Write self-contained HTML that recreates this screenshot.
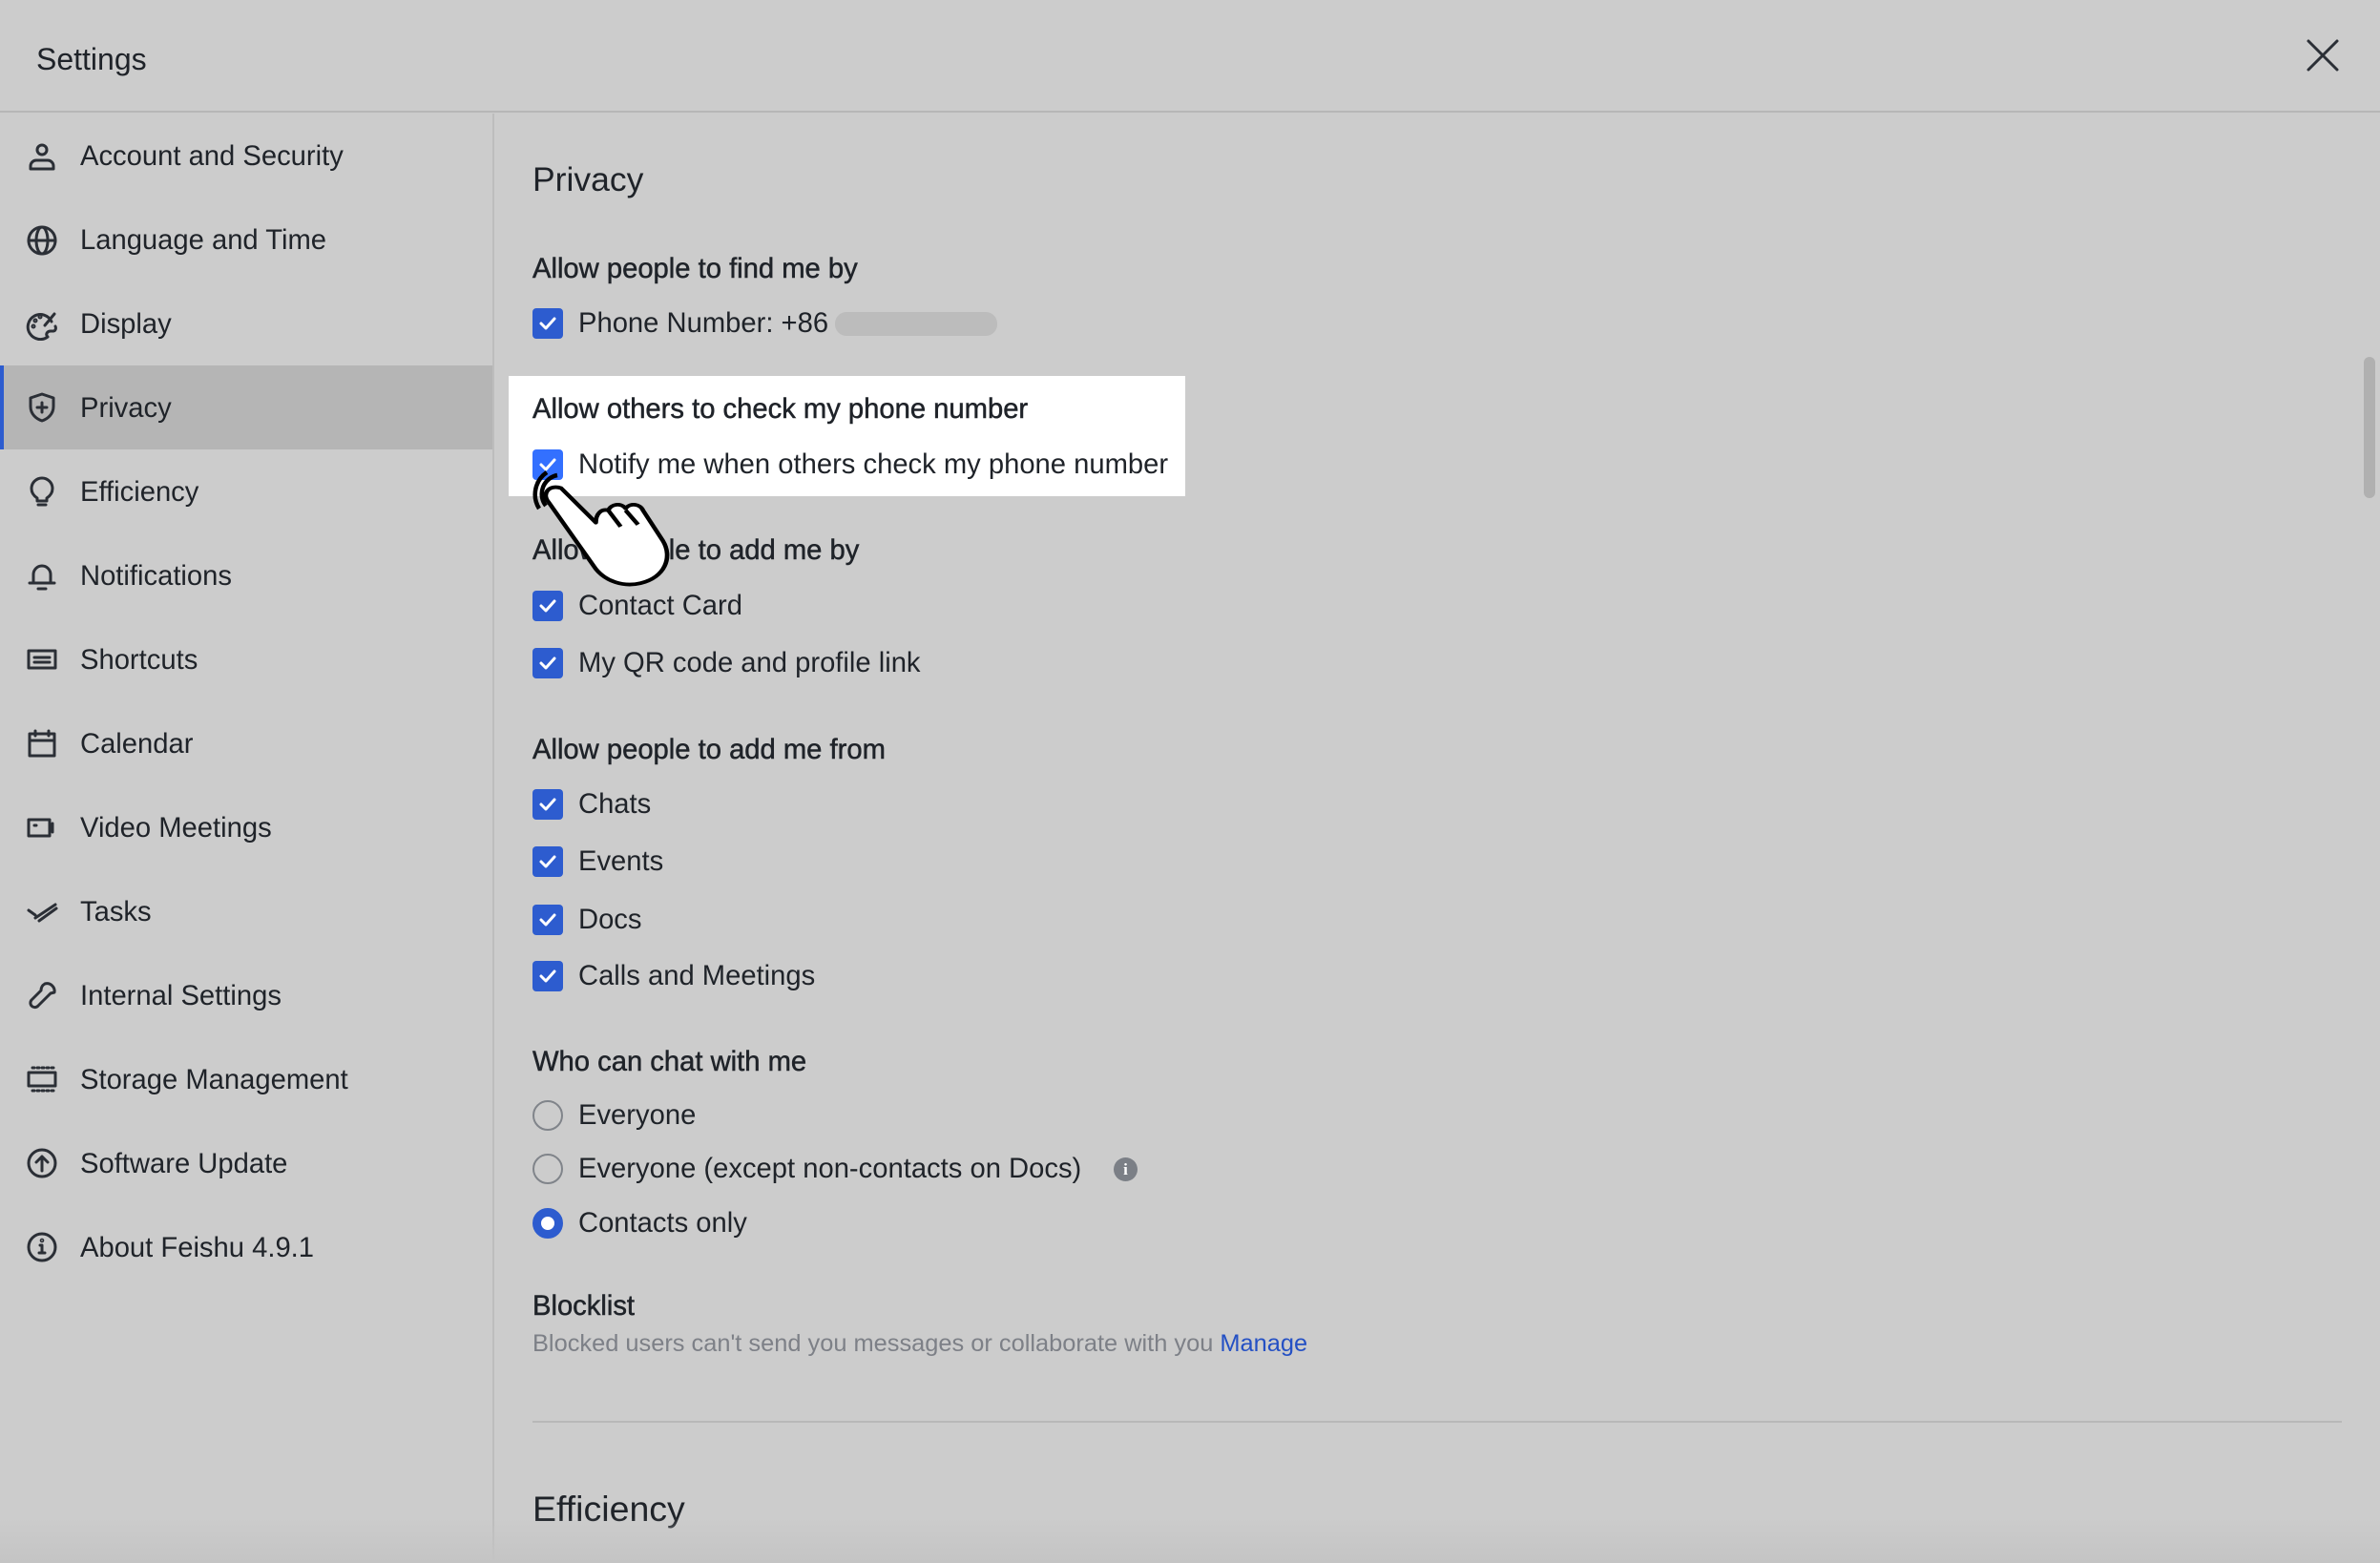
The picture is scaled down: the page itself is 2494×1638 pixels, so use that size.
<!DOCTYPE html>
<html><head><meta charset="utf-8"><style>
*{margin:0;padding:0;box-sizing:border-box}
body{width:2494px;height:1638px;background:#cccccc;font-family:"Liberation Sans",sans-serif;color:#1f2329;position:relative;overflow:hidden}
.a{position:absolute;white-space:nowrap;line-height:40px}
.s{font-size:29.2px}
.h{font-size:29.2px;-webkit-text-stroke:0.5px #1f2329}
.cb{position:absolute;left:558px;width:32px;height:32px;border-radius:4px;background:#2d5ccf}
.cb svg{position:absolute;left:6px;top:7px}
.ic{position:absolute;left:27px;width:34px;height:34px}
.ic *{fill:none;stroke:#2b2f36;stroke-width:3;stroke-linecap:round;stroke-linejoin:round}
.rd{position:absolute;left:558px;width:32px;height:32px;border-radius:50%;border:2.5px solid #80848a}
</style></head><body>
<div style="position:absolute;left:0;top:0;width:2494px;height:118px;border-bottom:2px solid #b7b7b7"></div>
<div class="a" style="left:38px;top:42px;font-size:32px">Settings</div>
<svg style="position:absolute;left:2416px;top:40px" width="36" height="36"><path d="M3 3L33 33M33 3L3 33" stroke="#2b2f36" stroke-width="3" stroke-linecap="round"/></svg>
<div style="position:absolute;left:516px;top:119px;width:2px;height:1519px;background:#bdbdbd"></div>
<div style="position:absolute;left:0;top:383px;width:516px;height:88px;background:#b5b5b5"></div>
<div style="position:absolute;left:0;top:383px;width:4px;height:88px;background:#2d5ccf"></div>

<svg class="ic" style="top:147px" viewBox="0 0 34 34"><circle cx="17" cy="10" r="5"/><path d="M5 30v-3a6 6 0 0 1 6-6h12a6 6 0 0 1 6 6v3z"/></svg>
<svg class="ic" style="top:235px" viewBox="0 0 34 34"><circle cx="17" cy="17" r="14"/><ellipse cx="17" cy="17" rx="6" ry="14"/><path d="M3 17h28"/></svg>
<svg class="ic" style="top:323px" viewBox="0 0 34 34"><path d="M27 14a13 13 0 1 0-4 16c-3-3 0-6 3-6h3c2 0 3-3 2-5"/><path d="M20 18l10-12"/><circle cx="10" cy="13" r="1"/><circle cx="8" cy="19" r="1"/><circle cx="15" cy="9" r="1"/></svg>
<svg class="ic" style="top:410px" viewBox="0 0 34 34"><path d="M17 3l12 4v9c0 8-6 13-12 15C11 29 5 24 5 16V7z"/><path d="M17 12v10M12 17h10"/></svg>
<svg class="ic" style="top:498px" viewBox="0 0 34 34"><path d="M12 24c-3-2-6-5-6-10a11 11 0 0 1 22 0c0 5-3 8-6 10v3H12z"/><path d="M13 31h8"/></svg>
<svg class="ic" style="top:586px" viewBox="0 0 34 34"><path d="M8 24V16a9 9 0 0 1 18 0v8"/><path d="M4 25h26M13 31h8"/></svg>
<svg class="ic" style="top:674px" viewBox="0 0 34 34"><rect x="3" y="8" width="28" height="18"/><path d="M9 15h16M9 20h16"/></svg>
<svg class="ic" style="top:762px" viewBox="0 0 34 34"><rect x="4" y="7" width="26" height="23"/><path d="M4 14h26M10 4v5M24 4v5"/></svg>
<svg class="ic" style="top:850px" viewBox="0 0 34 34"><rect x="3" y="9" width="22" height="17"/><path d="M28 13v9"/><path d="M9 15h2"/></svg>
<svg class="ic" style="top:938px" viewBox="0 0 34 34"><path d="M3 16l7 5M10 24L31 10M14 27L32 14"/></svg>
<svg class="ic" style="top:1026px" viewBox="0 0 34 34"><path d="M20 5a8 8 0 0 1 10 9l-4 1-3 3-10 10a4 4 0 0 1-7-6l10-10a8 8 0 0 1 4-7z"/></svg>
<svg class="ic" style="top:1114px" viewBox="0 0 34 34"><rect x="3" y="10" width="28" height="14"/><path d="M7 5h2M12 5h2M17 5h2M22 5h2M27 5h2M7 29h2M12 29h2M17 29h2M22 29h2M27 29h2"/></svg>
<svg class="ic" style="top:1202px" viewBox="0 0 34 34"><circle cx="17" cy="17" r="14"/><path d="M17 25V10M11 16l6-6 6 6"/></svg>
<svg class="ic" style="top:1290px" viewBox="0 0 34 34"><circle cx="17" cy="17" r="14"/><path d="M17 15v8M14 23h6M15 15h2"/><circle cx="17" cy="10" r="0.8"/></svg>

<div class="a s" style="left:84px;top:144px">Account and Security</div>
<div class="a s" style="left:84px;top:232px">Language and Time</div>
<div class="a s" style="left:84px;top:320px">Display</div>
<div class="a s" style="left:84px;top:408px">Privacy</div>
<div class="a s" style="left:84px;top:496px">Efficiency</div>
<div class="a s" style="left:84px;top:584px">Notifications</div>
<div class="a s" style="left:84px;top:672px">Shortcuts</div>
<div class="a s" style="left:84px;top:760px">Calendar</div>
<div class="a s" style="left:84px;top:848px">Video Meetings</div>
<div class="a s" style="left:84px;top:936px">Tasks</div>
<div class="a s" style="left:84px;top:1024px">Internal Settings</div>
<div class="a s" style="left:84px;top:1112px">Storage Management</div>
<div class="a s" style="left:84px;top:1200px">Software Update</div>
<div class="a s" style="left:84px;top:1288px">About Feishu 4.9.1</div>

<div class="a" style="left:558px;top:166px;font-size:35.5px;line-height:44px">Privacy</div>
<div class="a h" style="left:558px;top:262px">Allow people to find me by</div>
<div class="cb" style="top:323px"><svg width="20" height="18"><path d="M3 9l5 5 9-10" stroke="#fff" stroke-width="3" fill="none" stroke-linecap="round" stroke-linejoin="round"/></svg></div>
<div class="a s" style="left:606px;top:319px">Phone Number: +86</div>
<div style="position:absolute;left:875px;top:327px;width:170px;height:25px;border-radius:12px;background:#bcbcbc"></div>

<div style="position:absolute;left:533px;top:394px;width:709px;height:126px;background:#fff"></div>
<div class="a h" style="left:558px;top:409px">Allow others to check my phone number</div>
<div class="cb" style="top:471px;background:#3370ff"><svg width="20" height="18"><path d="M3 9l5 5 9-10" stroke="#fff" stroke-width="3" fill="none" stroke-linecap="round" stroke-linejoin="round"/></svg></div>
<div class="a s" style="left:606px;top:467px">Notify me when others check my phone number</div>

<div class="a h" style="left:558px;top:557px">Allow people to add me by</div>
<div class="cb" style="top:619px"><svg width="20" height="18"><path d="M3 9l5 5 9-10" stroke="#fff" stroke-width="3" fill="none" stroke-linecap="round" stroke-linejoin="round"/></svg></div>
<div class="a s" style="left:606px;top:615px">Contact Card</div>
<div class="cb" style="top:679px"><svg width="20" height="18"><path d="M3 9l5 5 9-10" stroke="#fff" stroke-width="3" fill="none" stroke-linecap="round" stroke-linejoin="round"/></svg></div>
<div class="a s" style="left:606px;top:675px">My QR code and profile link</div>

<div class="a h" style="left:558px;top:766px">Allow people to add me from</div>
<div class="cb" style="top:827px"><svg width="20" height="18"><path d="M3 9l5 5 9-10" stroke="#fff" stroke-width="3" fill="none" stroke-linecap="round" stroke-linejoin="round"/></svg></div>
<div class="a s" style="left:606px;top:823px">Chats</div>
<div class="cb" style="top:887px"><svg width="20" height="18"><path d="M3 9l5 5 9-10" stroke="#fff" stroke-width="3" fill="none" stroke-linecap="round" stroke-linejoin="round"/></svg></div>
<div class="a s" style="left:606px;top:883px">Events</div>
<div class="cb" style="top:948px"><svg width="20" height="18"><path d="M3 9l5 5 9-10" stroke="#fff" stroke-width="3" fill="none" stroke-linecap="round" stroke-linejoin="round"/></svg></div>
<div class="a s" style="left:606px;top:944px">Docs</div>
<div class="cb" style="top:1007px"><svg width="20" height="18"><path d="M3 9l5 5 9-10" stroke="#fff" stroke-width="3" fill="none" stroke-linecap="round" stroke-linejoin="round"/></svg></div>
<div class="a s" style="left:606px;top:1003px">Calls and Meetings</div>

<div class="a h" style="left:558px;top:1093px">Who can chat with me</div>
<div class="rd" style="top:1153px"></div>
<div class="a s" style="left:606px;top:1149px">Everyone</div>
<div class="rd" style="top:1209px"></div>
<div class="a s" style="left:606px;top:1205px">Everyone (except non-contacts on Docs)</div>
<div style="position:absolute;left:1167px;top:1213px;width:25px;height:25px;border-radius:50%;background:#7b7f86;color:#fff;font-size:17px;font-weight:bold;text-align:center;line-height:25px;font-family:'Liberation Serif',serif">i</div>
<div class="rd" style="top:1266px;border:9px solid #2d5ccf;background:#fff"></div>
<div class="a s" style="left:606px;top:1262px">Contacts only</div>

<div class="a h" style="left:558px;top:1349px">Blocklist</div>
<div class="a" style="left:558px;top:1393px;font-size:25.4px;line-height:30px;color:#7d8087">Blocked users can't send you messages or collaborate with you <span style="color:#2450c4">Manage</span></div>
<div style="position:absolute;left:558px;top:1489px;width:1896px;height:2px;background:#b8b8b8"></div>
<div class="a" style="left:558px;top:1559px;font-size:37.5px;line-height:44px">Efficiency</div>
<div style="position:absolute;left:0;top:1590px;width:2494px;height:48px;background:linear-gradient(#cccccc00,#c4c4c4)"></div>

<div style="position:absolute;left:2477px;top:374px;width:12px;height:148px;border-radius:6px;background:#b0b0b0"></div>

<svg style="position:absolute;left:555px;top:488px" width="180" height="130" viewBox="0 0 180 130">
<g fill="none" stroke="#000" stroke-width="4.5">
<path d="M10 45a28 28 0 0 1 8-38"/>
<path d="M17 42a20 20 0 0 1 12-32"/>
</g>
<g transform="translate(-6,-4) scale(1.3,1.06)">
<path d="M20 40c-6-8 0-18 10-14l28 34c0-8 4-14 10-12 2-6 10-8 14-2 4-6 12-4 14 2l16 30c8 16 2 36-18 42-14 4-28-2-36-14z" fill="#fff" stroke="#000" stroke-width="3.6" stroke-linejoin="round"/>
<path d="M68 48l10 16M82 48l10 14" stroke="#000" stroke-width="3.6" fill="none"/>
</g>
</svg>
</body></html>
